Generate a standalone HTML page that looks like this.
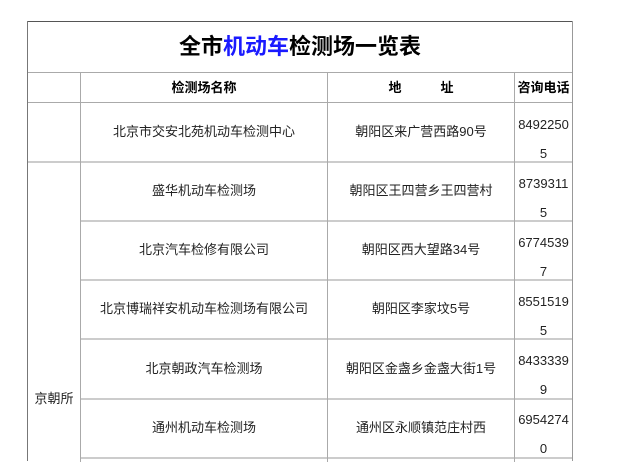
<!DOCTYPE html>
<html><head><meta charset="utf-8"><style>
body{margin:0;background:#fff;width:641px;height:460px;overflow:hidden;position:relative;font-family:"Liberation Sans","Noto Sans CJK SC",sans-serif;color:#222}
.h{position:absolute;height:0;border-top:1px solid #bbb}
.v{position:absolute;width:0;border-left:1px solid #aaa}
.t{position:absolute;text-align:center;font-size:13px;line-height:15px;white-space:nowrap}
</style></head><body>
<div class="h" style="left:27px;width:546px;top:21px;border-top:1px solid #555"></div>
<div class="h" style="left:27px;width:546px;top:72px;border-color:#aaa"></div>
<div class="h" style="left:27px;width:546px;top:102px;border-color:#aaa"></div>
<div class="h" style="left:27px;width:546px;top:161px;border-top:2px solid #ccc"></div>
<div class="h" style="left:80px;width:493px;top:220px;border-top:2px solid #ccc"></div>
<div class="h" style="left:80px;width:493px;top:279px;border-top:2px solid #ccc"></div>
<div class="h" style="left:80px;width:493px;top:338px;border-top:2px solid #ccc"></div>
<div class="h" style="left:80px;width:493px;top:398px;border-top:2px solid #ccc"></div>
<div class="h" style="left:80px;width:493px;top:457px;border-top:2px solid #ccc"></div>
<div class="v" style="left:27px;top:21px;height:440px;border-color:#777"></div>
<div class="v" style="left:572px;top:21px;height:440px;border-color:#999"></div>
<div class="v" style="left:80px;top:72px;height:390px"></div>
<div class="v" style="left:327px;top:72px;height:390px"></div>
<div class="v" style="left:514px;top:72px;height:390px"></div>

<div class="t" style="left:28px;width:544px;top:34px;font-size:22px;line-height:26px;font-weight:bold;color:#000">全市<span style="color:#1a1aff">机动车</span>检测场一览表</div>
<div class="t" style="left:81px;width:246px;top:80px;font-weight:bold;color:#000">检测场名称</div>
<div class="t" style="left:328px;width:186px;top:80px;font-weight:bold;color:#000">地　　　址</div>
<div class="t" style="left:515px;width:57px;top:80px;font-weight:bold;color:#000">咨询电话</div>
<div class="t" style="left:28px;width:52px;top:391px">京朝所</div>

<div class="t" style="left:81px;width:246px;top:124px">北京市交安北苑机动车检测中心</div>
<div class="t" style="left:328px;width:186px;top:124px">朝阳区来广营西路90号</div>
<div class="t" style="left:515px;width:57px;top:110px;line-height:29px">8492250<br>5</div>

<div class="t" style="left:81px;width:246px;top:183px">盛华机动车检测场</div>
<div class="t" style="left:328px;width:186px;top:183px">朝阳区王四营乡王四营村</div>
<div class="t" style="left:515px;width:57px;top:169px;line-height:29px">8739311<br>5</div>

<div class="t" style="left:81px;width:246px;top:242px">北京汽车检修有限公司</div>
<div class="t" style="left:328px;width:186px;top:242px">朝阳区西大望路34号</div>
<div class="t" style="left:515px;width:57px;top:228px;line-height:29px">6774539<br>7</div>

<div class="t" style="left:81px;width:246px;top:301px">北京博瑞祥安机动车检测场有限公司</div>
<div class="t" style="left:328px;width:186px;top:301px">朝阳区李家坟5号</div>
<div class="t" style="left:515px;width:57px;top:287px;line-height:29px">8551519<br>5</div>

<div class="t" style="left:81px;width:246px;top:361px">北京朝政汽车检测场</div>
<div class="t" style="left:328px;width:186px;top:361px">朝阳区金盏乡金盏大街1号</div>
<div class="t" style="left:515px;width:57px;top:346px;line-height:29px">8433339<br>9</div>

<div class="t" style="left:81px;width:246px;top:420px">通州机动车检测场</div>
<div class="t" style="left:328px;width:186px;top:420px">通州区永顺镇范庄村西</div>
<div class="t" style="left:515px;width:57px;top:405px;line-height:29px">6954274<br>0</div>
</body></html>
